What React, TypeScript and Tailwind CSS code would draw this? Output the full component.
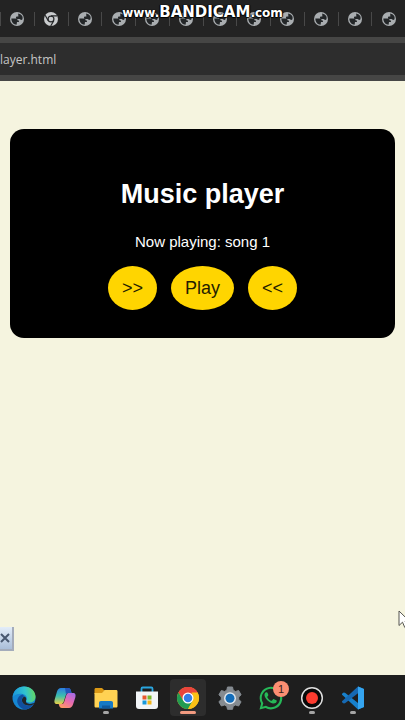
const tabs = ["globe", "chrome", "globe", "globe", "globe", "globe", "globe", "globe", "globe", "globe", "globe", "globe"]

function Globe() {
	return (
		<svg viewBox="0 0 24 24" className="size-3.5" aria-hidden="true">
			<circle cx="12" cy="12" r="12" fill="#a9adb0" />
			<path d="M14 2.500c3.500.6 6 2.500 7.500 5.500.3 2 .2 3.500-.3 5-1.700 1-3.700.5-4.700-.8h-4c-1.500 0-2.300-.8-2.300-2.200 0-1.500.8-2.300 2.300-2.300h1.800z" fill="#232628" />
			<path d="M2.300 11h7c2.300 0 4 1.500 4 3.500h2v2.500h-3.300l-.7 4.800C6.300 21.500 2.300 17 2.300 11z" fill="#232628" />
		</svg>
	)
}

function ChromeMono() {
	return (
		<svg viewBox="0 0 24 24" className="size-3.5" aria-hidden="true">
			<circle cx="12" cy="12" r="12" fill="#c9cbcd" />
			<circle cx="12" cy="12" r="5" fill="none" stroke="#26282a" strokeWidth="2" />
			<path d="M12 6.500h10.500M7.200 14.800L2 5.500M16.800 14.800L11.500 24" stroke="#26282a" strokeWidth="2" />
		</svg>
	)
}

function Edge() {
	return (
		<svg viewBox="0 0 24 24" className="size-6" aria-hidden="true">
			<defs>
				<linearGradient id="edge-top" x1="0" x2="1" y1="0.4" y2="0.3">
					<stop offset="0" stopColor="#1b98dc" />
					<stop offset="0.55" stopColor="#31c3cf" />
					<stop offset="1" stopColor="#66d85c" />
				</linearGradient>
			</defs>
			<circle cx="12" cy="12" r="11.500" fill="#1687d3" />
			<path d="M.8 11C1.500 4.500 6.300 .5 12 .5c6.700 0 11.500 4.700 11.500 10.200 0 3.800-3 5.800-6 5.800-2.500 0-4-1-3.200-2.200 1.200-1.600.8-5.300-3.500-6.300C6.500 7 2.500 8.500.8 11z" fill="url(#edge-top)" />
			<path d="M10.500 8.500c-4 1.200-6.300 5-4.800 9 1.500 3.800 5 6 8.300 5.800 3.300-.5 6-2.300 7.700-5-4.700 2.500-11.200 1.200-11.900-3.500-.2-1.700.5-3.500 2.200-4.300 0-.8-.4-1.500-1.500-2z" fill="#114f9f" />
			<path d="M10 13.500c-.8 4.500 5.500 7.800 11.700 4.800.8-.5.3-1.500-.6-1-4.400 1.500-7.800-.1-7.100-2.500.7-1.300.4-3.500-1.500-4.300-1.300.5-2.200 1.500-2.500 3z" fill="#20242a" />
		</svg>
	)
}

function Copilot() {
	return (
		<svg viewBox="0 0 24 24" className="size-6" aria-hidden="true">
			<defs>
				<linearGradient id="pilot-left" x1="0" x2="0" y1="0" y2="1">
					<stop offset="0" stopColor="#2b7de0" />
					<stop offset="0.5" stopColor="#3cbfae" />
					<stop offset="1" stopColor="#e9cf45" />
				</linearGradient>
				<linearGradient id="pilot-right" x1="0.8" x2="0.2" y1="0" y2="1">
					<stop offset="0" stopColor="#a66be5" />
					<stop offset="0.5" stopColor="#e86baf" />
					<stop offset="1" stopColor="#ff9a61" />
				</linearGradient>
			</defs>
			<path d="M8 2h7c1.800 0 2.500 1.300 3 3l.5 2h-3c-1.500 0-2.200.8-2.700 2.300l-2 6.200c-.6 1.900-1.600 2.500-3.300 2.500H4c-2.500 0-3-2-2.300-4.500L4 5.500C4.800 3.200 6 2 8 2z" fill="url(#pilot-left)" />
			<path d="M16 22H9c-1.800 0-2.500-1.300-3-3l-.3-1h2.800c1.500 0 2.200-.8 2.700-2.300l2-6.200C13.800 7.600 14.800 7 16.500 7H20c2.500 0 3 2 2.300 4.500l-2.300 7c-.8 2.300-2 3.500-4 3.500z" fill="url(#pilot-right)" />
			<path d="M12 2h3c1.800 0 2.500 1.300 3 3l.5 2h-3c-1.500 0-2 .3-2.500 1.500z" fill="#2355bb" />
		</svg>
	)
}

function Folder() {
	return (
		<svg viewBox="0 0 24 24" className="size-6" aria-hidden="true">
			<path d="M.5 3.500C.5 2.500 1 2 2 2h6l2.500 2.500L8 8H.5z" fill="#dc9915" />
			<path d="M.5 7h7.500l2.500-3H22c1 0 1.500.5 1.500 1.500V20c0 1-.5 1.500-1.500 1.500H2C1 21.500.5 21 .5 20z" fill="#ffd253" />
			<path d="M5 22.500V17c0-1.300.7-2 2-2h10c1.300 0 2 .7 2 2v5.500z" fill="#1679c5" />
			<path d="M8 22.500V19.500h8v3z" fill="#10599c" />
		</svg>
	)
}

function Store() {
	return (
		<svg viewBox="0 0 24 24" className="size-6" aria-hidden="true">
			<path d="M6.500 7V2.700c0-.8.500-1.200 1.200-1.200h8.600c.7 0 1.200.4 1.200 1.200V7" fill="none" stroke="#29a5df" strokeWidth="1.800" />
			<path d="M1 5.500h22V20c0 2-1 3-3 3H4c-2 0-3-1-3-3z" fill="#f2f5f7" />
			<path d="M7.500 9.500h4v4h-4z" fill="#e9592f" />
			<path d="M12.500 9.500h4v4h-4z" fill="#7bb82c" />
			<path d="M7.500 14.500h4v4h-4z" fill="#1799dc" />
			<path d="M12.500 14.500h4v4h-4z" fill="#f2b51c" />
		</svg>
	)
}

function Chrome() {
	return (
		<svg viewBox="0 0 48 48" className="size-6" aria-hidden="true">
			<circle cx="24" cy="24" r="22" fill="#fbc116" />
			<path d="M24 24L4.900 13A22 22 0 0 1 43.100 13z" fill="#e8453c" />
			<path d="M24 13h19.100A22 22 0 0 0 4.900 13l9.600 16.500z" fill="#e8453c" />
			<path d="M4.900 13A22 22 0 0 0 24 46l9.500-16.500-9.500 5.500-9.500-5.500z" fill="#229b52" />
			<path d="M24 46l9.500-16.500A11 11 0 0 0 33.500 18.500L31 13h12.100A22 22 0 0 1 24 46z" fill="#fbc116" />
			<circle cx="24" cy="24" r="11" fill="#fff" />
			<circle cx="24" cy="24" r="8.500" fill="#347de8" />
		</svg>
	)
}

function Gear() {
	return (
		<svg viewBox="0 0 24 24" className="size-6" aria-hidden="true">
			<path d="M9.500 1h5l.7 3.200 2.300 1.300 3.100-1 2.500 4.300L20.700 11v2.500l2.400 2.200-2.500 4.300-3.100-1-2.300 1.300-.7 3h-5l-.7-3-2.300-1.300-3.100 1-2.500-4.300 2.400-2.200V11L.9 8.800l2.500-4.300 3.100 1 2.300-1.300z" fill="#858b91" stroke="#858b91" strokeLinejoin="round" />
			<circle cx="12" cy="12.200" r="6" fill="#dfe6ec" />
			<circle cx="12" cy="12.200" r="4.500" fill="#126cb9" />
		</svg>
	)
}

function Whatsapp() {
	return (
		<svg viewBox="0 0 24 24" className="size-6" aria-hidden="true">
			<path d="M.5 23.500l1.600-5.900A11.300 11.300 0 1 1 6.500 22z" fill="#26b958" />
			<path d="M3.300 20.700l1-3.500A9.200 9.200 0 1 1 7 19.800z" fill="#1f2420" />
			<path d="M8.500 6.800c-.4-.7-.8-.7-1.300-.6-1 .2-1.900 1.500-1.700 3 .4 3 4.500 7.500 8.300 8.300 1.900.4 3.500-.5 3.900-1.900.2-.8.1-1-.4-1.300l-2.300-1.100c-.5-.2-.8-.1-1.100.3l-.9 1.100c-.3.3-.6.3-1 .1-1.500-.7-2.800-1.900-3.600-3.300-.2-.4-.1-.7.1-1l.7-.9c.2-.3.2-.5.1-.8z" fill="#26b958" />
		</svg>
	)
}

function Recorder() {
	return (
		<svg viewBox="0 0 24 24" className="size-6" aria-hidden="true">
			<circle cx="12" cy="12" r="10.300" fill="#080808" stroke="#dedede" strokeWidth="1.500" />
			<circle cx="12" cy="12" r="6" fill="#fb3b2f" />
		</svg>
	)
}

function Code() {
	return (
		<svg viewBox="0 0 24 24" className="size-6" aria-hidden="true">
			<path d="M17 .5L23 3v18l-6 2.500L3 10.500l-2-1.700v-1L2.700 6.500l1.300.2L17 17z" fill="#1780cb" />
			<path d="M17 .5v6.800L4 17.300l-1.300.2L1 16.200v-1z" fill="#1669b3" />
			<path d="M17 .5L23 3v18l-6 2.500z" fill="#35a5f0" />
		</svg>
	)
}

const apps = [
	{ name: "Edge", Icon: Edge },
	{ name: "Copilot", Icon: Copilot },
	{ name: "File Explorer", Icon: Folder, open: true },
	{ name: "Store", Icon: Store },
	{ name: "Chrome", Icon: Chrome, active: true },
	{ name: "Settings", Icon: Gear },
	{ name: "WhatsApp", Icon: Whatsapp, badge: 1 },
	{ name: "Recorder", Icon: Recorder, open: true },
	{ name: "VS Code", Icon: Code, open: true },
]

function BrowserBar() {
	return (
		<header className="relative bg-[#464645]">
			<div className="flex h-[37px] items-center bg-[#232323]">
				{tabs.map((tab, i) => (
					<button key={i} aria-label="Tab" className="flex h-3.5 flex-1 items-center justify-center border-l border-[#484848]">
						{tab === "chrome" ? <ChromeMono /> : <Globe />}
					</button>
				))}
			</div>
			<div className="py-1.5">
				<input
					aria-label="Address"
					defaultValue="layer.html"
					className="block h-8 w-full bg-[#2d2d2d] font-['Open_Sans',sans-serif] text-xs font-medium text-[#c6c6c6] outline-none"
				/>
			</div>
			<p className="absolute inset-x-0 top-0.5 flex items-baseline justify-center font-['DejaVu_Sans',sans-serif] text-xs leading-5 font-bold text-white [text-shadow:0_1px_1px_#000,1px_0_1px_#000,-1px_0_1px_#000]">
				www.<span className="text-[15px]">BANDICAM</span>.com
			</p>
		</header>
	)
}

function Player() {
	const button = "rounded-[50%] bg-[#ffd500] px-3.5 text-lg leading-11 text-[#241d00]"

	return (
		<section className="mx-2.5 mt-12 rounded-[14px] bg-black px-4 pt-[47px] pb-7 text-center text-white">
			<h1 className="text-[27px] leading-9 font-bold">Music player</h1>
			<p className="mt-5 text-[15px] leading-5">Now playing: song 1</p>
			<div className="mt-3.5 flex justify-center gap-3.5">
				<button className={button}>&gt;&gt;</button>
				<button className={button}>Play</button>
				<button className={button}>&lt;&lt;</button>
			</div>
		</section>
	)
}

function Taskbar() {
	return (
		<nav className="grid h-[45px] grid-cols-9 bg-[#1e1e1e] pr-[31px] pl-[3px]">
			{apps.map(({ name, Icon, open, active, badge }) => (
				<button key={name} aria-label={name} className={`relative mx-auto my-1 flex w-9 items-center justify-center rounded-sm ${active ? "bg-[#2d2d2d]" : ""}`}>
					<Icon />
					{badge && <span className="absolute top-0.5 right-0 flex size-4 items-center justify-center rounded-full bg-[#fb8e72] text-[11px] text-[#352019]">{badge}</span>}
					{open && <span className="absolute bottom-0.5 h-[3px] w-1.5 rounded-full bg-[#a5a5a5]" />}
					{active && <span className="absolute bottom-0.5 h-[3px] w-4 rounded-full bg-[#f19a80]" />}
				</button>
			))}
		</nav>
	)
}

export default function App() {
	return (
		<div className="relative flex min-h-screen flex-col overflow-hidden bg-[#f5f4df] font-['Liberation_Sans',Arial,sans-serif]">
			<BrowserBar />
			<main className="flex flex-1 flex-col">
				<Player />
				<button aria-label="Close" className="mt-auto mb-6 flex h-6 w-3.5 items-center justify-end border-r-2 border-b-2 border-[#a4acbb] bg-linear-to-b from-[#e3edf9] to-[#aabed9] pr-0.5">
					<svg viewBox="0 0 10 10" className="size-2.5" aria-hidden="true">
						<path d="M1 1l8 8M9 1L1 9" stroke="#48576f" strokeWidth="2" />
					</svg>
				</button>
			</main>
			<Taskbar />
			<svg viewBox="0 0 12 19" className="absolute -right-[5px] bottom-[91px] h-[19px] w-3" aria-hidden="true">
				<path d="M1 1v14.500l3.500-3.300 2.300 5.300 2.500-1-2.300-5.200h4.500z" fill="#fff" stroke="#55554f" />
			</svg>
		</div>
	)
}
